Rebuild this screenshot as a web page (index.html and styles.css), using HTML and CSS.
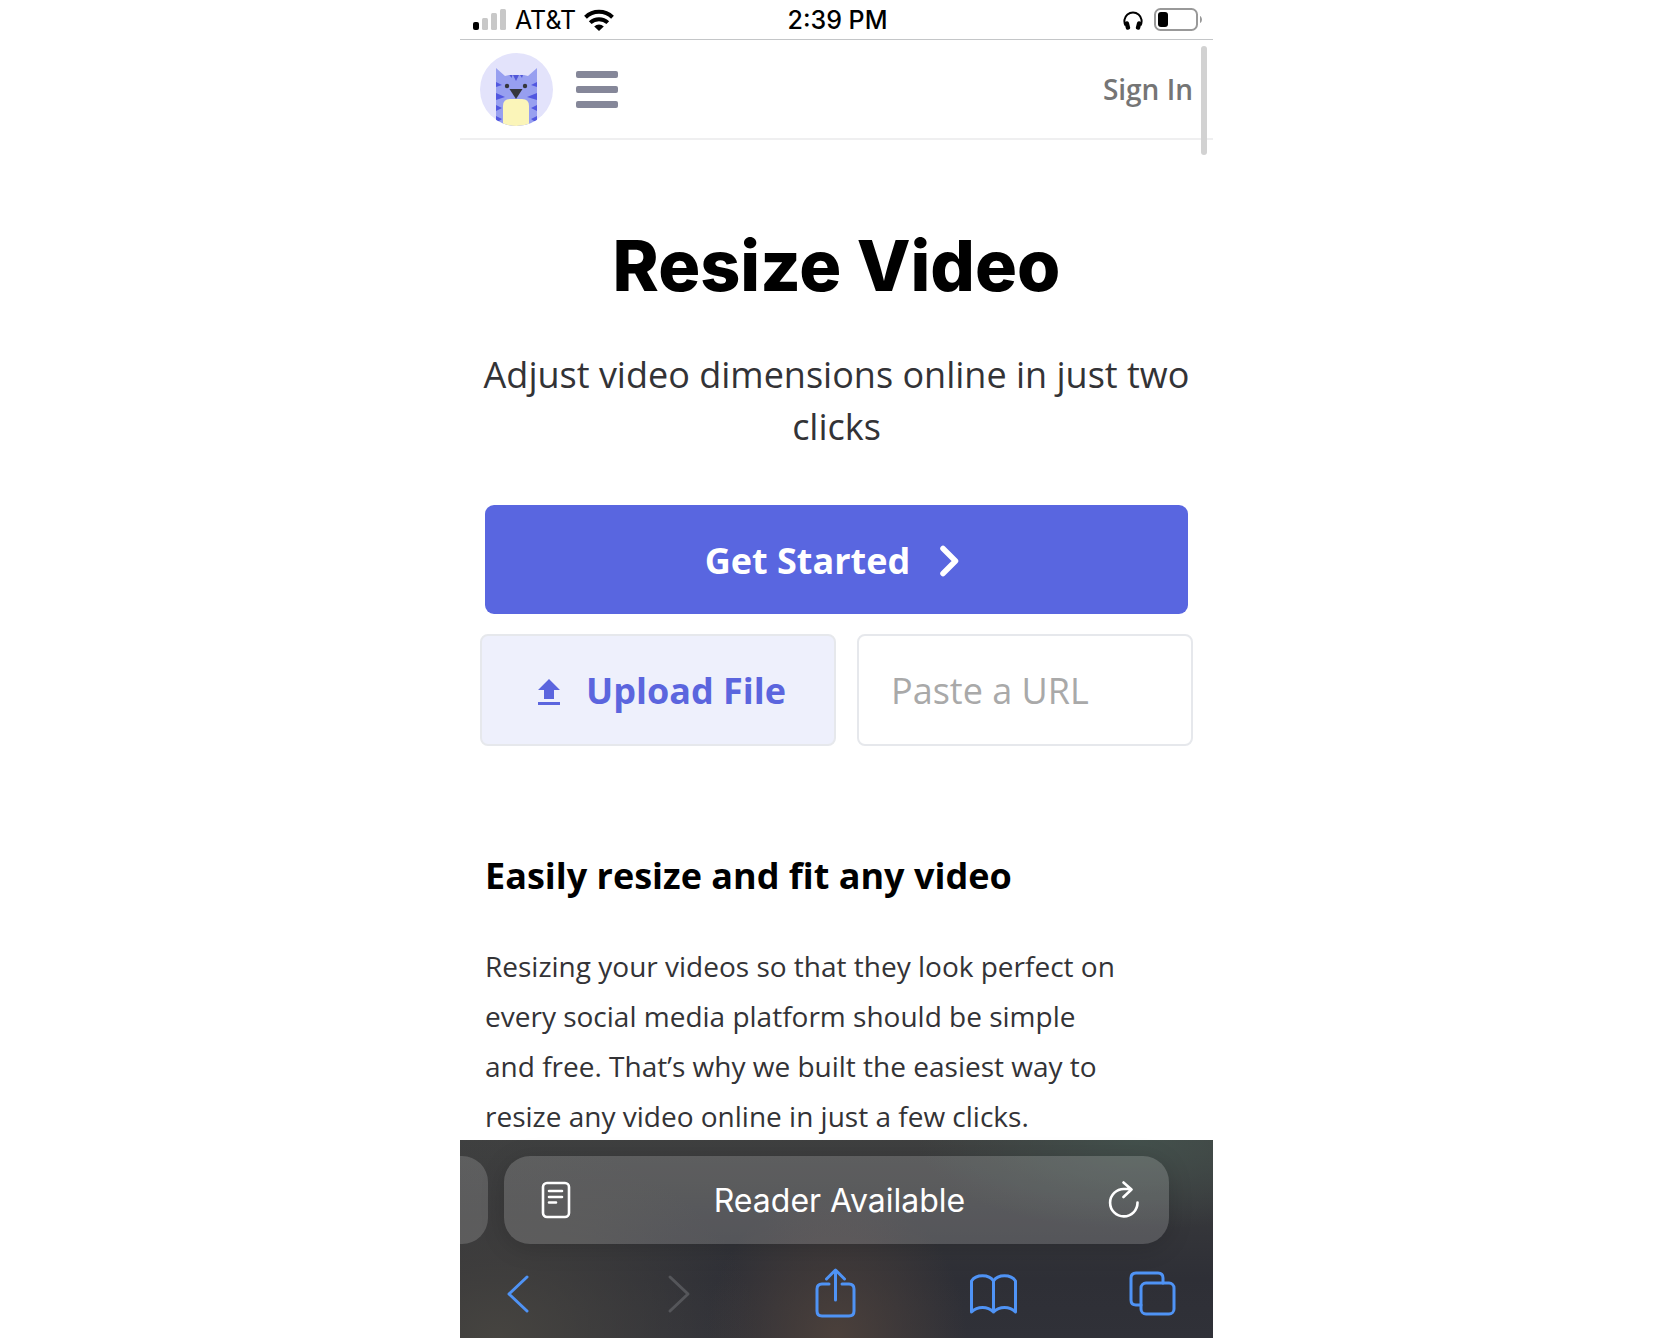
FILE: index.html
```html
<!DOCTYPE html>
<html lang="en">
<head>
  <meta charset="UTF-8" />
  <meta name="viewport" content="width=device-width, initial-scale=1.0"/>
  <title>Resize Video</title>
  <link rel="stylesheet" href="styles.css">
</head>
<body>
  <div class="phone">
    <div class="status-bar">
      <div class="status-left">
        <svg width="34" height="22" viewBox="0 0 34 22">
          <rect x="0" y="13" width="6" height="8" rx="2" fill="#000"/>
          <rect x="9" y="9" width="6" height="12" rx="1.5" fill="#c8c8c8"/>
          <rect x="18" y="4" width="6" height="17" rx="1.5" fill="#c8c8c8"/>
          <rect x="27" y="0" width="6" height="21" rx="1.5" fill="#c8c8c8"/>
        </svg>
        <span class="carrier">AT&amp;T</span>
        <svg width="30" height="22" viewBox="0 0 30 22" fill="none" stroke="#000" stroke-width="4">
          <path d="M1.5 8.2a19.5 19.5 0 0 1 27 0"/>
          <path d="M6.2 13.6a13 13 0 0 1 17.6 0"/>
          <path d="M15 22l-4.8-4.6a7 7 0 0 1 9.6 0z" fill="#000" stroke="none"/>
        </svg>
      </div>
      <div class="time">2:39 PM</div>
      <div class="status-right">
        <svg width="20" height="20" viewBox="0 0 20 20">
          <path d="M2.6 15.5A8.6 8.6 0 1 1 17.4 15.5" fill="none" stroke="#000" stroke-width="2"/>
          <rect x="2.2" y="11.2" width="4.4" height="8.6" rx="2" transform="rotate(-14 4.4 15.5)"/>
          <rect x="13.4" y="11.2" width="4.4" height="8.6" rx="2" transform="rotate(14 15.6 15.5)"/>
        </svg>
        <svg width="48" height="24" viewBox="0 0 48 24">
          <rect x="1" y="1" width="42" height="21" rx="5.5" fill="none" stroke="#999" stroke-width="2"/>
          <rect x="4" y="4" width="10" height="15" rx="3"/>
          <path d="M46 8c2.6 1 2.6 6 0 7z" fill="#999"/>
        </svg>
      </div>
    </div>

    <header class="header">
      <a href="#" class="logo" aria-label="Home">
        <svg width="73" height="73" viewBox="0 0 73 73">
          <defs><clipPath id="round"><circle cx="36.5" cy="36.5" r="36.5"/></clipPath></defs>
          <g clip-path="url(#round)">
            <rect width="73" height="73" fill="#e3e3fb"/>
            <path d="M16 15l9 8 4-1h15l4 1 9-8v58H16z" fill="#979ff0"/>
            <path d="M29.500 22h3l-1 3zM33 22h6l-3 6zM40 22h3l-1 3z" fill="#5157d8"/>
            <path d="M16 29l6 3-6 2zM16 40l9 4-9 3zM16 52l6 3-6 3zM16 63l6 3-6 4zM57 29l-6 3 6 2zM57 40l-10 4 10 3zM57 52l-6 3 6 3zM57 63l-6 3 6 4z" fill="#5157e0"/>
            <path d="M23 73V53q0-7 7-7h12q7 0 7 7v20z" fill="#fbf5b9"/>
            <circle cx="27" cy="33" r="2.200" fill="#35363c"/>
            <circle cx="45" cy="33" r="2.200" fill="#35363c"/>
            <path d="M29.500 36h13L36 46z" fill="#35363c"/>
          </g>
        </svg>
      </a>
      <button class="menu-btn" aria-label="Menu">
        <span></span>
        <span></span>
        <span></span>
      </button>
      <a href="#" class="sign-in">Sign In</a>
    </header>
    <div class="scrollbar"></div>

    <main class="content">
      <h1>Resize Video</h1>
      <p class="subtitle">Adjust video dimensions online in just two clicks</p>
      <div class="actions">
        <button class="start-btn">
          Get Started
          <svg width="20" height="32" viewBox="0 0 20 32" fill="none" stroke="#fff" stroke-width="5.500" stroke-linecap="round" stroke-linejoin="round"><path d="M3 3.500L15.500 16 3 28.500"/></svg>
        </button>
        <div class="action-row">
          <button class="upload-btn">
            <svg width="22" height="26" viewBox="0 0 22 26" fill="#5b65de"><path d="M11 0l11 11h-6v9H6v-9H0zM0 23h22v3H0z"/></svg>
            Upload File
          </button>
          <input class="url-input" type="text" placeholder="Paste a URL" aria-label="Paste a URL">
        </div>
      </div>
      <section class="about">
        <h2>Easily resize and fit any video</h2>
        <p>Resizing your videos so that they look perfect on every social media platform should be simple and free. That’s why we built the easiest way to resize any video online in just a few clicks.</p>
      </section>
    </main>

    <footer class="toolbar">
      <div class="tabs">
        <div class="prev-tab"></div>
        <div class="address">
          <button aria-label="Reader">
            <svg width="30" height="38" viewBox="0 0 30 38" fill="none" stroke="#fff" stroke-width="2.600" stroke-linecap="round"><rect x="2" y="2" width="26" height="34" rx="4"/><path d="M8 10h13M8 16h13M8 21.500h7"/></svg>
          </button>
          <span>Reader Available</span>
          <button aria-label="Reload">
            <svg width="32" height="38" viewBox="0 0 32 38" fill="none" stroke="#fff" stroke-width="2.600" stroke-linecap="round" stroke-linejoin="round"><path d="M29.500 21.500A13.700 13.700 0 1 1 16 8h7M15.500 1.500L23.500 8.500 15.500 16"/></svg>
          </button>
        </div>
      </div>
      <nav class="nav">
        <button aria-label="Back"><svg width="48" height="52" viewBox="0 0 48 52"><path d="M33 9L15 26l18 17"/></svg></button>
        <button aria-label="Forward" class="disabled" disabled><svg width="48" height="52" viewBox="0 0 48 52"><path d="M17 9l18 17-18 17"/></svg></button>
        <button aria-label="Share"><svg width="48" height="52" viewBox="0 0 48 52"><path d="M17 16h-7q-5 0-5 5v22q0 5 5 5h27q5 0 5-5V21q0-5-5-5h-7M23.500 32V3M14.500 11l9-9 9 9"/></svg></button>
        <button aria-label="Bookmarks"><svg width="48" height="52" viewBox="0 0 48 52"><path d="M23.500 13C19 6 6 6 1.500 13v31c6-6 16-6 22 0 6-6 16-6 22 0V13C41 6 28 6 23.500 13zv31"/></svg></button>
        <button aria-label="Tabs"><svg width="48" height="52" viewBox="0 0 48 52"><rect x="12" y="15" width="33" height="31" rx="5"/><path d="M12 37H7q-5 0-5-5V10q0-5 5-5h22q5 0 5 5v5"/></svg></button>
      </nav>
    </footer>
  </div>
</body>
</html>
```
FILE: styles.css
```css
* {
  box-sizing: border-box;
}

body {
  margin: 0;
  background-color: #fff;
  font-family: "Open Sans", sans-serif;
  color: #333336;
}

button {
  border: none;
  background: none;
  padding: 0;
  font-family: inherit;
  cursor: pointer;
}

svg {
  display: block;
}

h1, h2, p {
  margin: 0;
}

.phone {
  position: relative;
  display: flex;
  flex-direction: column;
  max-width: 753px;
  height: 100vh;
  margin: 0 auto;
}

/* status bar */
.status-bar {
  display: grid;
  grid-template-columns: 1fr auto 1fr;
  align-items: center;
  height: 40px;
  padding: 1px 11px 0 13px;
  border-bottom: 1px solid #c4c6c8;
  font-family: Inter, sans-serif;
  font-size: 25px;
  color: #000;
}

.status-left, .status-right {
  display: flex;
  align-items: center;
  gap: 8px;
}

.status-right {
  justify-content: flex-end;
  gap: 11px;
}

.time {
  font-weight: 500;
}

/* site header */
.header {
  display: flex;
  align-items: center;
  height: 100px;
  padding: 0 20px;
  border-bottom: 2px solid #efeff0;
}

.menu-btn {
  display: flex;
  flex-direction: column;
  gap: 8px;
  width: 42px;
  margin-left: 23px;
}

.menu-btn span {
  height: 7px;
  border-radius: 2px;
  background-color: #858799;
}

.sign-in {
  margin-left: auto;
  font-size: 28px;
  font-weight: 600;
  color: #757575;
  text-decoration: none;
}

.scrollbar {
  position: absolute;
  top: 46px;
  right: 6px;
  width: 6px;
  height: 109px;
  border-radius: 3px;
  background-color: #d2d2d2;
}

/* page content */
.content {
  flex: 1;
  min-height: 0;
  overflow: hidden;
  padding: 84px 20px 0;
}

h1 {
  font-family: Inter, sans-serif;
  font-size: 70px;
  font-weight: 800;
  line-height: 84px;
  text-align: center;
  color: #000;
}

.subtitle {
  margin-top: 41px;
  font-size: 36px;
  line-height: 52px;
  text-align: center;
}

.actions {
  margin-top: 52px;
}

.start-btn {
  display: flex;
  align-items: center;
  justify-content: center;
  gap: 30px;
  width: calc(100% - 10px);
  height: 109px;
  margin: 0 5px 20px;
  padding: 2px 8px 0 0;
  border-radius: 9px;
  background-color: #5966e0;
  font-size: 36px;
  font-weight: 700;
  color: #fff;
}

.action-row {
  display: grid;
  grid-template-columns: 356fr 336fr;
  gap: 21px;
}

.upload-btn, .url-input {
  min-width: 0;
  height: 112px;
  border: 2px solid #e6e8ec;
  border-radius: 8px;
  font-size: 36px;
}

.upload-btn {
  display: flex;
  align-items: center;
  justify-content: center;
  gap: 26px;
  padding-left: 8px;
  background-color: #eef0fc;
  font-weight: 700;
  color: #5b65de;
}

.upload-btn svg {
  margin-top: 4px;
}

.url-input {
  padding: 0 32px;
  background-color: #fff;
  font-family: inherit;
}

.url-input::placeholder {
  color: #a9a9a9;
}

.about {
  margin-top: 105px;
  padding: 0 70px 0 5px;
}

h2 {
  font-size: 36px;
  font-weight: 700;
  line-height: 50px;
  color: #000;
}

.about p {
  margin-top: 40px;
  font-size: 28px;
  line-height: 50px;
}

/* browser toolbar */
.toolbar {
  flex: none;
  height: 198px;
  padding-top: 16px;
  background:
    radial-gradient(ellipse 130px 150px at 50% 100%, #4b403b, transparent),
    radial-gradient(ellipse 220px 90px at 90% 0%, #43504c, transparent),
    radial-gradient(ellipse 260px 200px at 5% 100%, #464440, transparent),
    linear-gradient(#3f4040, #2e2f36 70%, #303138);
}

.tabs {
  display: flex;
  gap: 16px;
  padding-right: 44px;
}

.prev-tab {
  width: 28px;
  height: 88px;
  border-radius: 0 26px 26px 0;
  background-color: rgba(255, 255, 255, 0.17);
}

.address {
  flex: 1;
  display: flex;
  align-items: center;
  justify-content: space-between;
  height: 88px;
  padding: 0 29px 0 37px;
  border-radius: 26px;
  background-color: rgba(255, 255, 255, 0.17);
  box-shadow: 0 4px 24px rgba(0, 0, 0, 0.15);
  font-family: Inter, sans-serif;
  font-size: 32px;
  color: #fff;
}

.nav {
  display: flex;
  justify-content: space-between;
  padding: 24px 36px 0 34px;
}

.nav svg {
  fill: none;
  stroke: #4f93f5;
  stroke-width: 3;
  stroke-linecap: round;
  stroke-linejoin: round;
}

.nav .disabled svg {
  stroke: #55565a;
}
```
